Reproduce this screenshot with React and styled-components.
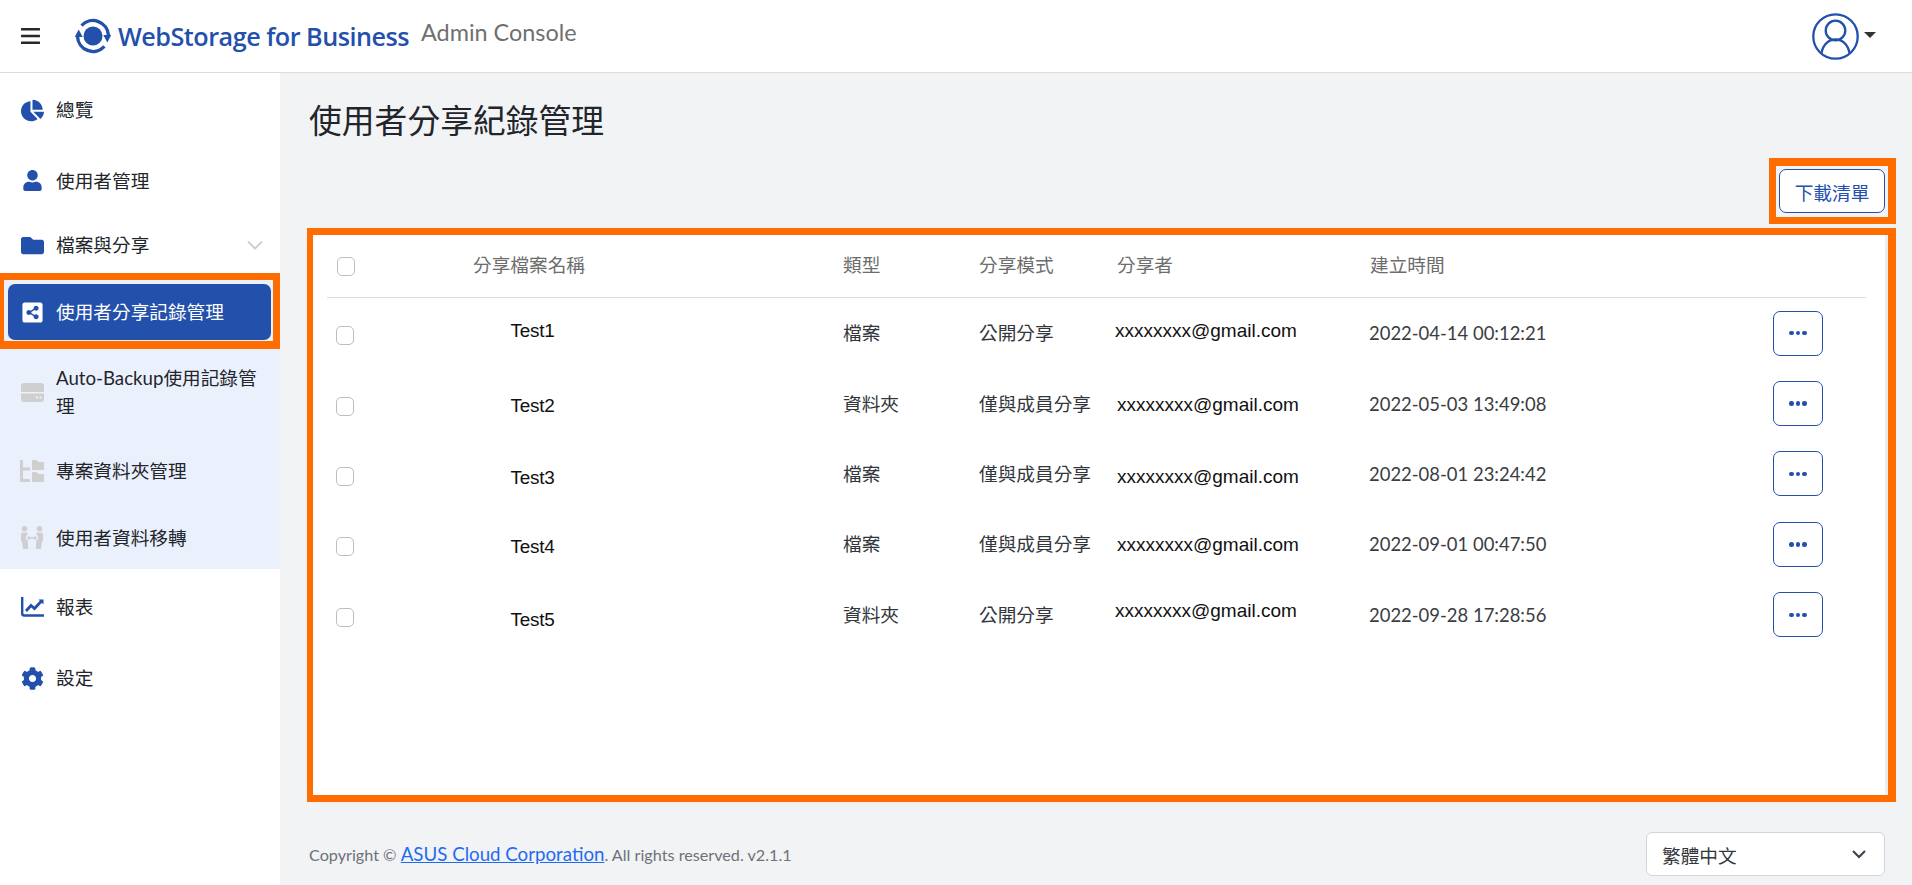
import React from "react";
import styled, { createGlobalStyle } from "styled-components";
import { FaChartPie, FaUser, FaFolder, FaShareAltSquare, FaCog } from "react-icons/fa";

const Global = createGlobalStyle`
  html, body { margin: 0; padding: 0; height: 100%; }
  body { font-family: Lato, "Noto Sans CJK TC", sans-serif; color: #2b2f36; background: #f2f3f5; overflow: hidden; }
  * { box-sizing: border-box; }
`;

const BLUE = "#2350ab";
const ORANGE = "#ff6d00";

const Page = styled.div`
  width: 100%;
  height: 885px;
  display: flex;
  flex-direction: column;
`;

const Header = styled.header`
  height: 73px;
  flex: none;
  background: #fff;
  border-bottom: 1px solid #dcdcdc;
  display: flex;
  align-items: center;
  padding: 0 36px 0 21px;
`;
const MenuIcon = styled.svg`
  width: 19px;
  height: 16px;
  flex: none;
  margin-right: 35px;
`;
const LogoMark = styled.svg`
  width: 36px;
  height: 36px;
  flex: none;
  margin-right: 7px;
`;
const LogoText = styled.span`
  font-family: "Open Sans", sans-serif;
  font-weight: 600;
  font-size: 25.2px;
  letter-spacing: -0.5px;
  color: ${BLUE};
  line-height: 36px;
  white-space: nowrap;
`;
const ConsoleText = styled.span`
  font-size: 23.4px;
  color: #707070;
  margin-left: 12px;
  margin-top: -8px;
  white-space: nowrap;
`;
const UserMenu = styled.div`
  margin-left: auto;
  display: flex;
  align-items: center;
  gap: 5px;
`;
const Avatar = styled.svg`
  width: 47px;
  height: 47px;
`;
const Caret = styled.span`
  width: 0;
  height: 0;
  border-left: 6px solid transparent;
  border-right: 6px solid transparent;
  border-top: 6px solid #333;
  margin-top: -3px;
`;

const Body = styled.div`
  flex: 1;
  display: flex;
  min-height: 0;
`;
const Sidebar = styled.nav`
  width: 280px;
  flex: none;
  background: #fff;
  display: flex;
  flex-direction: column;
`;
const Item = styled.div`
  height: ${(p) => p.$h}px;
  display: flex;
  align-items: center;
  padding-left: 20px;
  font-size: 18.67px;
  line-height: 28px;
  color: #22252b;
  position: relative;
`;
const IconBox = styled.span`
  width: 24px;
  flex: none;
  margin-right: 12px;
  display: flex;
  align-items: center;
  justify-content: center;
  color: ${(p) => p.$color || BLUE};
  font-size: ${(p) => p.$size || 23}px;
  margin-top: ${(p) => p.$up || 0}px;
`;
const Label = styled.span`
  flex: 1;
  padding-right: 20px;
`;
const Chevron = styled.svg`
  position: absolute;
  left: 247px;
  top: 25px;
  width: 16px;
  height: 10px;
`;
const SubGroup = styled.div`
  background: #ebf1fc;
  display: flex;
  flex-direction: column;
`;
const ActiveWrap = styled.div`
  height: 74px;
  padding: 9px 9px 9px 8px;
  position: relative;
`;
const ActiveItem = styled.div`
  height: 56px;
  background: ${BLUE};
  border-radius: 7px;
  display: flex;
  align-items: center;
  padding-left: 12px;
  color: #fff;
  font-size: 18.67px;
`;
const ActiveLabel = styled.span`
  padding-bottom: 3px;
`;
const SideMark = styled.div`
  position: absolute;
  top: -2px;
  left: 0;
  right: 0;
  bottom: 0;
  border: solid ${ORANGE};
  border-width: 7px 7px 8px 4px;
  pointer-events: none;
`;

const Main = styled.main`
  flex: 1;
  min-width: 0;
  padding: 24px 27px 0 29px;
  display: flex;
  flex-direction: column;
`;
const Title = styled.h1`
  margin: 0;
  font-size: 32.8px;
  line-height: 48px;
  font-weight: 400;
  color: #22252b;
`;
const Toolbar = styled.div`
  margin-top: 24px;
  display: flex;
  justify-content: flex-end;
`;
const ToolWrap = styled.div`
  position: relative;
`;
const DownloadButton = styled.button`
  display: block;
  width: 106px;
  height: 44px;
  background: #fff;
  border: 1.5px solid ${BLUE};
  border-radius: 7px;
  color: ${BLUE};
  font: inherit;
  font-size: 18.67px;
  padding: 0;
`;
const ToolMark = styled.div`
  position: absolute;
  top: -11px;
  left: -10px;
  right: -11px;
  bottom: -11px;
  border: solid ${ORANGE};
  border-width: 8px 8px 7px 7px;
  pointer-events: none;
`;
const CardWrap = styled.div`
  position: relative;
  margin: 22px 0 0 4px;
`;
const Card = styled.section`
  height: 560px;
  background: #fff;
  padding: 0 19px 0 14px;
  box-shadow: 0 2px 12px rgba(0, 0, 0, 0.07);
`;
const CardMark = styled.div`
  position: absolute;
  top: -7px;
  left: -6px;
  right: -11px;
  bottom: -7px;
  border: solid ${ORANGE};
  border-width: 7px 8px 7px 6px;
  pointer-events: none;
`;
const COLS = "73px 443px 135px 137px 255px 403px 93px";
const HeadRow = styled.div`
  height: 63px;
  display: grid;
  grid-template-columns: ${COLS};
  align-items: center;
  border-bottom: 1px solid #dcdcdc;
  color: #6d6d6d;
  font-size: 18.67px;
`;
const BodyRow = styled.div`
  height: 70.4px;
  display: grid;
  grid-template-columns: ${COLS};
  align-items: center;
  font-size: 18.67px;
  color: #33363b;
`;
const HeadCell = styled.div`
  padding-bottom: 6px;
  padding-left: ${(p) => p.$pl || 0}px;
`;
const NameHead = styled(HeadCell)`
  padding-right: 185px;
  text-align: center;
`;
const Checkbox = styled.span`
  display: block;
  width: 18px;
  height: 19px;
  margin-left: ${(p) => p.$ml}px;
  margin-top: ${(p) => p.$mt || 0}px;
  background: #fff;
  border: 1px solid #bdbdbd;
  border-radius: 5px;
`;
const PastedName = styled.div`
  font-family: "Liberation Sans", Arial, sans-serif;
  font-size: 18.9px;
  letter-spacing: -0.2px;
  color: #111;
  padding-right: 178px;
  text-align: center;
  margin-top: ${(p) => p.$dy}px;
`;
const TextCell = styled.div`
  margin-top: -3px;
  padding-left: ${(p) => p.$pl || 0}px;
  white-space: nowrap;
`;
const PastedMail = styled.div`
  font-family: "Liberation Sans", Arial, sans-serif;
  font-size: 19px;
  color: #111;
  margin-top: ${(p) => p.$dy}px;
  margin-left: ${(p) => p.$dx}px;
  white-space: nowrap;
`;
const Time = styled.div`
  font-size: 18.45px;
  color: #3b3d42;
  margin-left: -1px;
`;
const MoreButton = styled.button`
  width: 50px;
  height: 45px;
  background: #fff;
  border: 1.5px solid ${BLUE};
  border-radius: 7px;
  padding: 0;
  display: flex;
  align-items: center;
  justify-content: center;
  gap: 2px;
`;
const Dot = styled.i`
  width: 4.5px;
  height: 4.5px;
  border-radius: 50%;
  background: ${BLUE};
`;
const Footer = styled.footer`
  margin-top: 37px;
  display: flex;
  align-items: center;
  justify-content: space-between;
  font-size: 16.2px;
  color: #6d7178;
`;
const CopyText = styled.div`
  white-space: nowrap;
`;
const CopyLink = styled.a`
  color: #1f6bf0;
  font-size: 18.7px;
  text-decoration: underline;
`;
const LangSelect = styled.div`
  width: 239px;
  height: 44px;
  background: #fff;
  border: 1px solid #d0d5dd;
  border-radius: 6px;
  display: flex;
  align-items: center;
  justify-content: space-between;
  padding: 0 18px 0 15px;
  font-size: 18.67px;
  color: #33363b;
`;

const rows = [
  ["Test1", "檔案", "公開分享", "2022-04-14 00:12:21", -5, -4, -2],
  ["Test2", "資料夾", "僅與成員分享", "2022-05-03 13:49:08", 5, 2, 0],
  ["Test3", "檔案", "僅與成員分享", "2022-08-01 23:24:42", 9, 7, 0],
  ["Test4", "檔案", "僅與成員分享", "2022-09-01 00:47:50", 5, 2, 0],
  ["Test5", "資料夾", "公開分享", "2022-09-28 17:28:56", 11, -7, -2],
];

const ProjectIcon = () => (
  <svg width="24" height="22" viewBox="0 0 24 22" fill="#cfcfcf">
    <rect x="0" y="0" width="3" height="22" />
    <rect x="0" y="7.500" width="10" height="3" />
    <rect x="0" y="19" width="10" height="3" />
    <path d="M12 1a1 1 0 0 1 1-1h3.500l2 2H23a1 1 0 0 1 1 1v6a1 1 0 0 1-1 1H13a1 1 0 0 1-1-1z" />
    <path d="M12 13a1 1 0 0 1 1-1h3.500l2 2H23a1 1 0 0 1 1 1v6a1 1 0 0 1-1 1H13a1 1 0 0 1-1-1z" />
  </svg>
);
const TransferIcon = () => (
  <svg width="24" height="23" viewBox="0 0 24 23" fill="#cfcfcf">
    <circle cx="4.500" cy="2.800" r="2.800" />
    <circle cx="19.500" cy="2.800" r="2.800" />
    <path d="M1 8.500C1 7 2.200 6.500 3.500 6.500H6c1.200 0 2 .8 2 1.600L6.600 9.600 5.500 12l1.300 2 1.200 1.200V23H3l-.6-6L1 15z" />
    <path d="M23 8.500c0-1.500-1.200-2-2.500-2H18c-1.200 0-2 .8-2 1.600l1.400 1.500 1.100 2.400-1.300 2-1.200 1.200V23h5l.6-6 1.400-2z" />
    <path d="M6.500 12l3-2.600v1.800h5V9.400l3 2.600-3 2.600v-1.800h-5v1.800z" />
  </svg>
);
const ServerIcon = () => (
  <svg width="23" height="19" viewBox="0 0 23 19" fill="#cfcfcf">
    <path d="M0 9V3a3 3 0 0 1 3-3h17a3 3 0 0 1 3 3v6z" />
    <path fillRule="evenodd" d="M0 10.500h23V16a3 3 0 0 1-3 3H3a3 3 0 0 1-3-3zM15 13.500v2h2v-2zM18.500 13.500v2h2v-2z" />
  </svg>
);
const ChartIcon = () => (
  <svg width="23" height="20" viewBox="0 0 23 20" fill="none" stroke={BLUE}>
    <path d="M1.200 0v16.500a2 2 0 0 0 2 2H23" strokeWidth="2.400" />
    <path d="M5 14l5-5.500 3.500 3L21 3.500" strokeWidth="2.800" />
    <path d="M17.500 2.500h5v5z" fill={BLUE} stroke="none" />
  </svg>
);

export default function App() {
  return (
    <Page>
      <Global />
      <Header>
        <MenuIcon viewBox="0 0 19 16" fill="#26282c">
          <rect width="19" height="2.600" rx="0.6" />
          <rect y="6.700" width="19" height="2.600" rx="0.6" />
          <rect y="13.400" width="19" height="2.600" rx="0.6" />
        </MenuIcon>
        <LogoMark viewBox="0 0 36 36">
          <circle cx="18" cy="18" r="9.500" fill={BLUE} />
          <path d="M6.600 7.600A15.500 15.500 0 0 1 33.500 17.500" fill="none" stroke={BLUE} strokeWidth="3.400" />
          <path d="M29.400 28.400A15.500 15.500 0 0 1 2.500 18.500" fill="none" stroke={BLUE} strokeWidth="3.400" />
          <path d="M28.300 17h8l-4 7.500zM7.700 19h-8l4-7.500z" fill={BLUE} />
        </LogoMark>
        <LogoText>WebStorage for Business</LogoText>
        <ConsoleText>Admin Console</ConsoleText>
        <UserMenu>
          <Avatar viewBox="0 0 47 47" fill="none" stroke={BLUE} strokeWidth="2.300">
            <circle cx="23.500" cy="23.500" r="22.200" />
            <circle cx="23.500" cy="17.500" r="9.800" />
            <path d="M9.500 40c1.500-8.500 7-13.500 14-13.500S36 31.500 37.500 40" />
          </Avatar>
          <Caret />
        </UserMenu>
      </Header>
      <Body>
        <Sidebar>
          <Item $h={74}>
            <IconBox><FaChartPie /></IconBox>
            <Label>總覽</Label>
          </Item>
          <Item $h={68}>
            <IconBox $size={21} $up={-2}><FaUser /></IconBox>
            <Label>使用者管理</Label>
          </Item>
          <Item $h={60}>
            <IconBox><FaFolder /></IconBox>
            <Label>檔案與分享</Label>
            <Chevron viewBox="0 0 16 10" fill="none" stroke="#cfcfcf" strokeWidth="2">
              <path d="M1 1.500l7 7 7-7" />
            </Chevron>
          </Item>
          <SubGroup>
            <ActiveWrap>
              <ActiveItem>
                <IconBox $color="#fff"><FaShareAltSquare /></IconBox>
                <ActiveLabel>使用者分享記錄管理</ActiveLabel>
              </ActiveItem>
              <SideMark />
            </ActiveWrap>
            <Item $h={86}>
              <IconBox><ServerIcon /></IconBox>
              <Label>Auto-Backup使用記錄管理</Label>
            </Item>
            <Item $h={71}>
              <IconBox><ProjectIcon /></IconBox>
              <Label>專案資料夾管理</Label>
            </Item>
            <Item $h={63}>
              <IconBox><TransferIcon /></IconBox>
              <Label>使用者資料移轉</Label>
            </Item>
          </SubGroup>
          <Item $h={75}>
            <IconBox><ChartIcon /></IconBox>
            <Label>報表</Label>
          </Item>
          <Item $h={68}>
            <IconBox><FaCog /></IconBox>
            <Label>設定</Label>
          </Item>
        </Sidebar>
        <Main>
          <Title>使用者分享紀錄管理</Title>
          <Toolbar>
            <ToolWrap>
              <DownloadButton>下載清單</DownloadButton>
              <ToolMark />
            </ToolWrap>
          </Toolbar>
          <CardWrap>
            <Card>
              <HeadRow>
                <Checkbox $ml={10} />
                <NameHead>分享檔案名稱</NameHead>
                <HeadCell>類型</HeadCell>
                <HeadCell $pl={1}>分享模式</HeadCell>
                <HeadCell $pl={2}>分享者</HeadCell>
                <HeadCell>建立時間</HeadCell>
                <div />
              </HeadRow>
              {rows.map(([name, type, mode, time, nameDy, mailDy, mailDx]) => (
                <BodyRow key={name}>
                  <Checkbox $ml={9} $mt={5} />
                  <PastedName $dy={nameDy}>{name}</PastedName>
                  <TextCell>{type}</TextCell>
                  <TextCell $pl={1}>{mode}</TextCell>
                  <PastedMail $dy={mailDy} $dx={mailDx + 2}>xxxxxxxx@gmail.com</PastedMail>
                  <Time>{time}</Time>
                  <MoreButton>
                    <Dot />
                    <Dot />
                    <Dot />
                  </MoreButton>
                </BodyRow>
              ))}
            </Card>
            <CardMark />
          </CardWrap>
          <Footer>
            <CopyText>
              Copyright © <CopyLink href="#">ASUS Cloud Corporation</CopyLink>. All rights reserved. v2.1.1
            </CopyText>
            <LangSelect>
              繁體中文
              <svg width="14" height="9" viewBox="0 0 14 9" fill="none" stroke="#3a3f4b" strokeWidth="2">
                <path d="M1 1l6 6 6-6" />
              </svg>
            </LangSelect>
          </Footer>
        </Main>
      </Body>
    </Page>
  );
}
